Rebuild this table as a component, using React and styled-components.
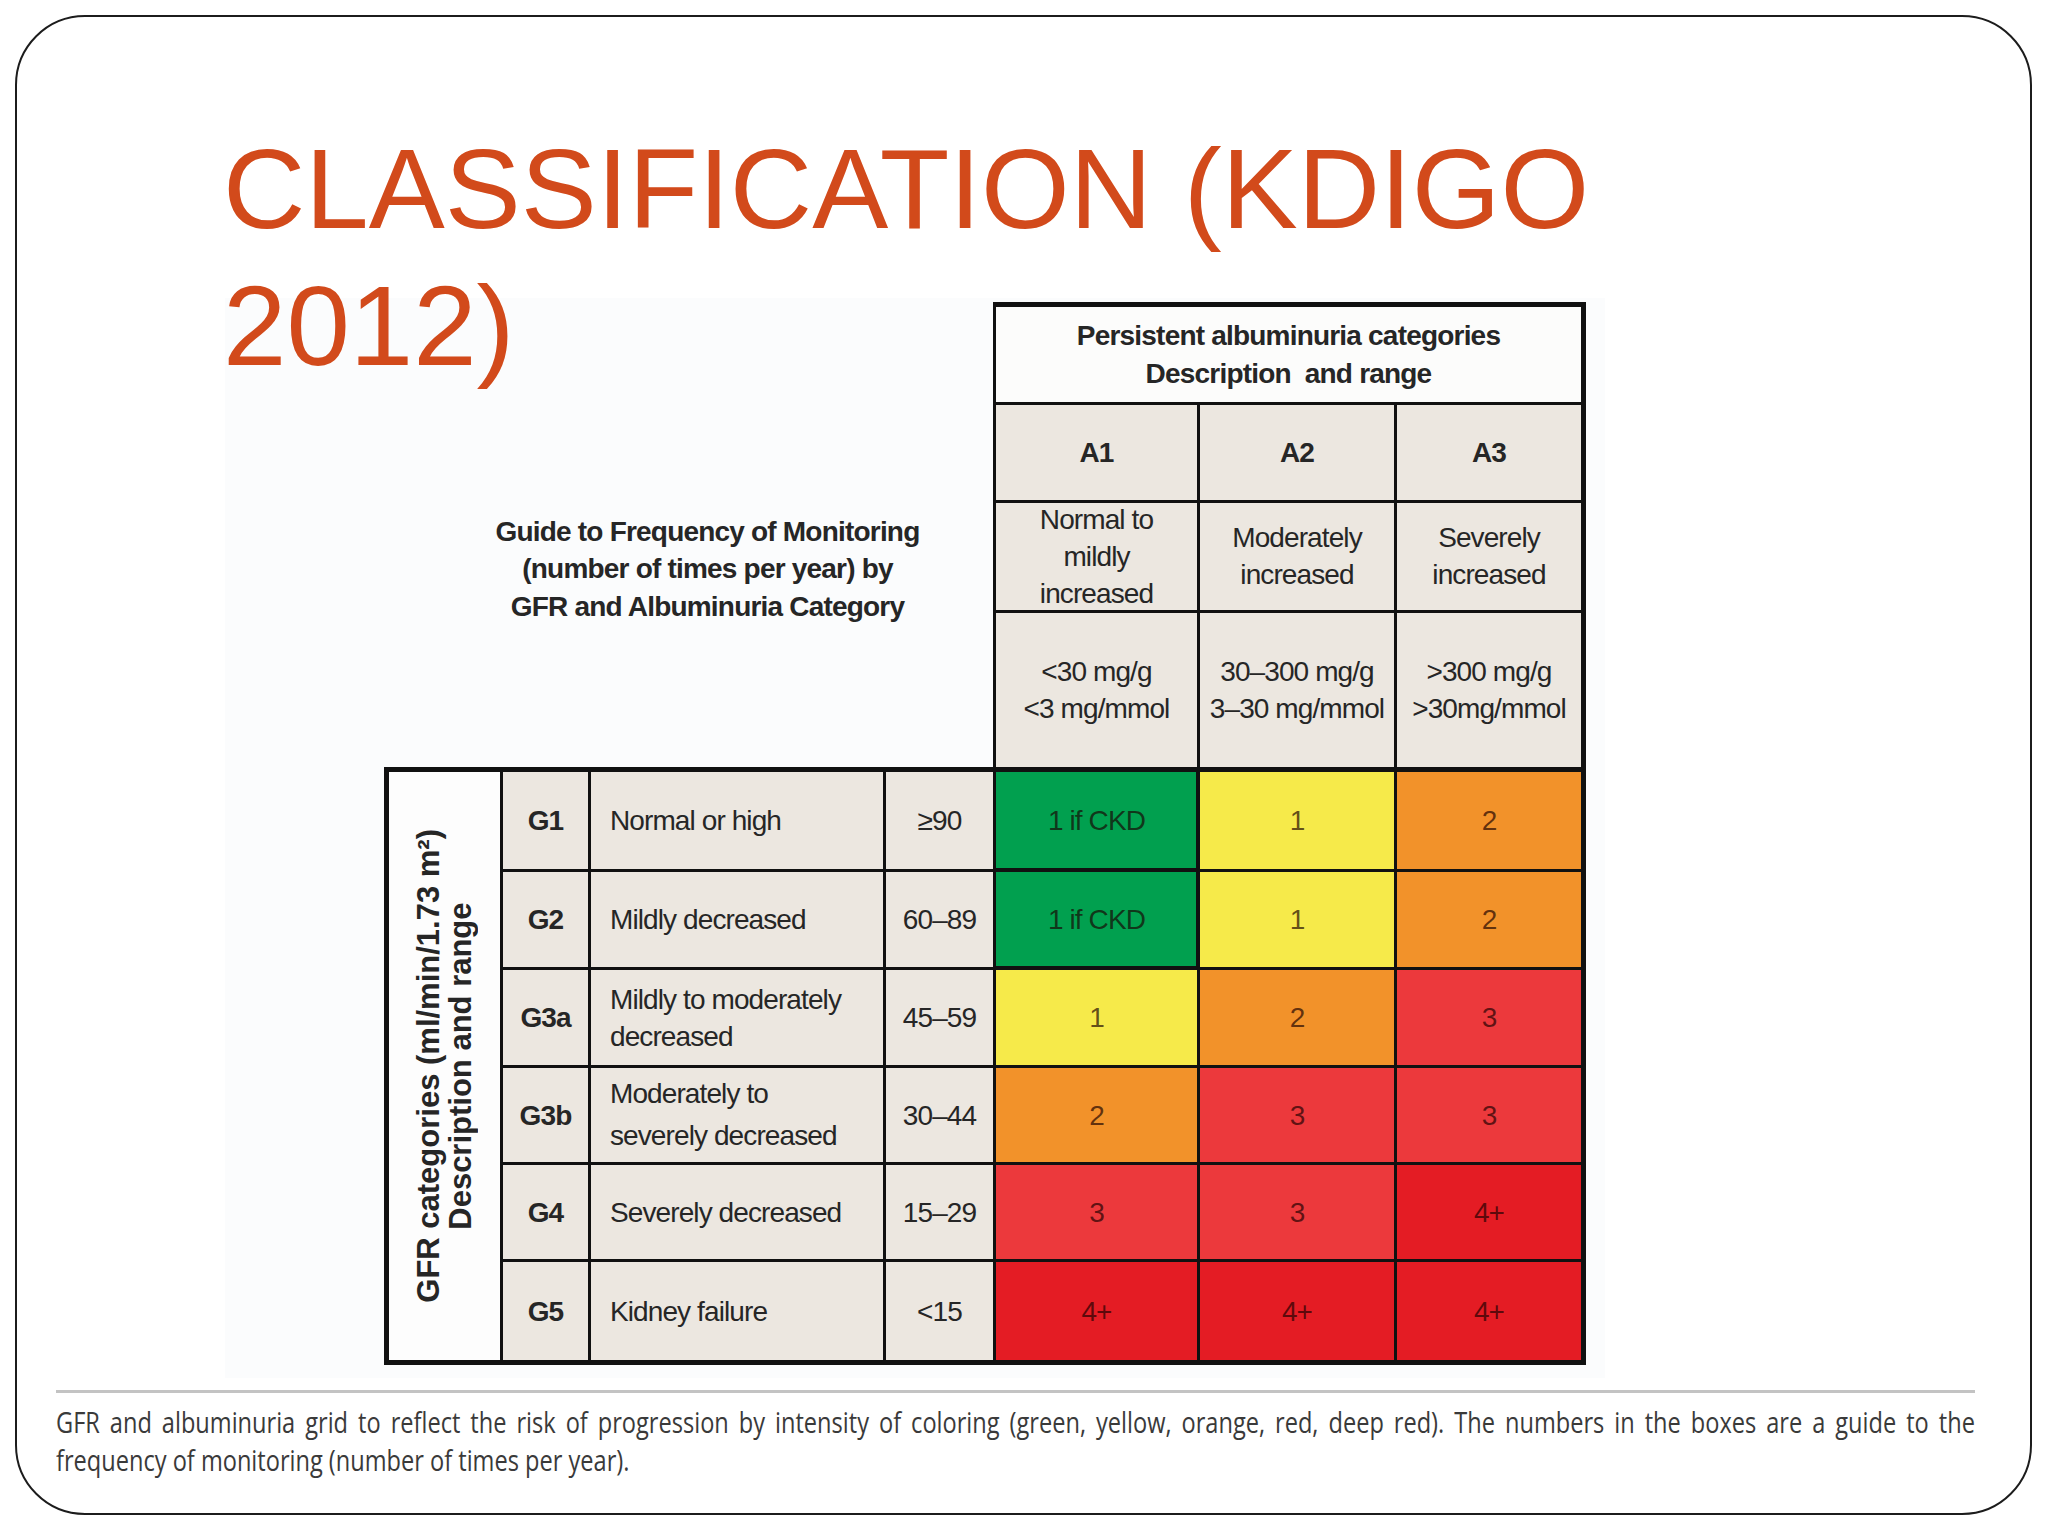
import React from "react";
import styled, { createGlobalStyle } from "styled-components";

const GlobalStyle = createGlobalStyle`
  html, body {
    margin: 0;
    padding: 0;
    background: #fff;
    overflow: hidden;
  }
  body {
    font-family: "Liberation Sans", Arial, sans-serif;
  }
`;

const RISK = {
  green: "#01a04f",
  yellow: "#f6ea4a",
  orange: "#f2922a",
  red: "#ec393c",
  deep: "#e41c24",
};

const gfrRows = [
  { code: "G1", desc: "Normal or high", range: "≥90", risk: [["1 if CKD", "green"], ["1", "yellow"], ["2", "orange"]] },
  { code: "G2", desc: "Mildly decreased", range: "60–89", risk: [["1 if CKD", "green"], ["1", "yellow"], ["2", "orange"]] },
  { code: "G3a", desc: ["Mildly to moderately", "decreased"], range: "45–59", risk: [["1", "yellow"], ["2", "orange"], ["3", "red"]] },
  { code: "G3b", desc: ["Moderately to", "severely decreased"], range: "30–44", risk: [["2", "orange"], ["3", "red"], ["3", "red"]] },
  { code: "G4", desc: "Severely decreased", range: "15–29", risk: [["3", "red"], ["3", "red"], ["4+", "deep"]] },
  { code: "G5", desc: "Kidney failure", range: "<15", risk: [["4+", "deep"], ["4+", "deep"], ["4+", "deep"]] },
];

const albCols = [
  { code: "A1", desc: ["Normal to", "mildly", "increased"], range: ["<30 mg/g", "<3 mg/mmol"] },
  { code: "A2", desc: ["Moderately", "increased"], range: ["30–300 mg/g", "3–30 mg/mmol"] },
  { code: "A3", desc: ["Severely", "increased"], range: [">300 mg/g", ">30mg/mmol"] },
];

const Page = styled.div`
  width: 2048px;
  height: 1536px;
  padding: 15px 0 0 15px;
  box-sizing: border-box;
`;

const Frame = styled.div`
  width: 2017px;
  height: 1500px;
  box-sizing: border-box;
  border: 2px solid #1c1c1c;
  border-radius: 70px;
  display: flex;
  flex-direction: column;
`;

const Stack = styled.div`
  display: grid;
  grid-template-areas: "stack";
  & > * {
    grid-area: stack;
    align-self: start;
    justify-self: start;
  }
`;

const Title = styled.h1`
  margin: 103px 0 0 206px;
  font-family: "Liberation Sans", Arial, sans-serif;
  font-weight: 400;
  font-size: 114px;
  line-height: 137px;
  color: #d24a1b;
`;

const Figure = styled.div`
  margin: 281px 0 0 208px;
  width: 1380px;
  box-sizing: border-box;
  padding: 4px 0 13px 159px;
  background: #fbfcfd;
`;

const Chart = styled.div`
  width: 1202px;
  display: flex;
  flex-direction: column;
  font-family: "Liberation Sans", Arial, sans-serif;
  color: #262626;
`;

const TopPart = styled.div`
  display: flex;
`;

const Guide = styled.div`
  width: 609px;
  height: 465px;
  box-sizing: border-box;
  padding: 69px 0 0 38px;
  display: flex;
  align-items: center;
  justify-content: center;
  text-align: center;
  font-weight: 700;
  font-size: 28px;
  line-height: 37.5px;
  letter-spacing: -0.8px;
`;

const HeaderBox = styled.div`
  flex: 1;
  box-sizing: border-box;
  border: solid #111;
  border-width: 5px 5px 0 3px;
  background: #111;
  display: grid;
  grid-template-columns: 201px 194px 1fr;
  grid-template-rows: 95px 94.5px 107px 154.5px;
  gap: 3px;
`;

const Grid = styled.div`
  display: grid;
  grid-template-columns: 111px 85px 292px 107px 201px 194px 1fr;
  grid-template-rows: 97px 95px 95px 94px 94px 98px;
  gap: 3px;
  border: 5px solid #111;
  background: #111;
`;

const Cell = styled.div`
  background: #ece7e0;
  display: flex;
  flex-direction: column;
  align-items: center;
  justify-content: center;
  text-align: center;
  font-size: 28px;
  line-height: 37px;
  letter-spacing: -0.9px;
  font-weight: ${(p) => (p.$bold ? 700 : 400)};
  white-space: nowrap;
`;

const HeadTitle = styled.div`
  grid-column: 1 / span 3;
  background: #fcfcfb;
  display: flex;
  align-items: center;
  justify-content: center;
  text-align: center;
  font-size: 28px;
  font-weight: 700;
  line-height: 38px;
  letter-spacing: -0.8px;
  white-space: pre;
`;

const DescCell = styled(Cell)`
  align-items: flex-start;
  text-align: left;
  padding-left: 19px;
  line-height: ${(p) => (p.$loose ? "42px" : "37px")};
`;

const SideCell = styled(Cell)`
  grid-row: 1 / span 6;
  background: #fdfdfd;
`;

const SideText = styled.div`
  writing-mode: vertical-rl;
  transform: rotate(180deg);
  font-weight: 700;
  font-size: 31px;
  line-height: 32px;
  letter-spacing: 0;
  text-align: center;
`;

const RiskCell = styled(Cell)`
  background: ${(p) => RISK[p.$tone]};
  color: rgba(25, 0, 0, 0.68);
  box-shadow: ${(p) => (p.$tone === "green" ? "inset -1px -1px 0 #111" : "none")};
`;

const Caption = styled.div`
  margin: 12px 0 0 39px;
  width: 1919px;
  border-top: 3px solid #c3c3c3;
  padding-top: 10px;
`;

const CaptionText = styled.p`
  margin: 0;
  width: 2360px;
  transform: scaleX(0.8131);
  transform-origin: left top;
  font-family: "Open Sans", "Noto Sans", sans-serif;
  font-size: 29px;
  line-height: 38px;
  color: #3a3a3a;
`;

const CaptionLine = styled.span`
  display: block;
  text-align: ${(p) => (p.$justify ? "justify" : "left")};
  text-align-last: ${(p) => (p.$justify ? "justify" : "auto")};
`;

const Lines = ({ items }) =>
  (Array.isArray(items) ? items : [items]).map((t, i) => <span key={i}>{t}</span>);

export default function App() {
  return (
    <>
      <GlobalStyle />
      <Page>
        <Frame>
          <Stack>
            <Figure>
              <Chart>
                <TopPart>
                  <Guide>
                    Guide to Frequency of Monitoring
                    <br />
                    (number of times per year) by
                    <br />
                    GFR and Albuminuria Category
                  </Guide>
                  <HeaderBox>
                    <HeadTitle>
                      {"Persistent albuminuria categories\nDescription  and range"}
                    </HeadTitle>
                    {albCols.map((c) => (
                      <Cell key={c.code} $bold>
                        {c.code}
                      </Cell>
                    ))}
                    {albCols.map((c) => (
                      <Cell key={c.code + "d"}>
                        <Lines items={c.desc} />
                      </Cell>
                    ))}
                    {albCols.map((c) => (
                      <Cell key={c.code + "r"}>
                        <Lines items={c.range} />
                      </Cell>
                    ))}
                  </HeaderBox>
                </TopPart>
                <Grid>
                  <SideCell>
                    <SideText>
                      GFR categories (ml/min/1.73 m²)
                      <br />
                      Description and range
                    </SideText>
                  </SideCell>
                  {gfrRows.map((r) => (
                    <React.Fragment key={r.code}>
                      <Cell $bold>{r.code}</Cell>
                      <DescCell $loose={r.code === "G3b"}>
                        <Lines items={r.desc} />
                      </DescCell>
                      <Cell>{r.range}</Cell>
                      {r.risk.map(([v, tone], i) => (
                        <RiskCell key={i} $tone={tone}>
                          {v}
                        </RiskCell>
                      ))}
                    </React.Fragment>
                  ))}
                </Grid>
              </Chart>
            </Figure>
            <Title>
              CLASSIFICATION (KDIGO
              <br />
              2012)
            </Title>
          </Stack>
          <Caption>
            <CaptionText>
              <CaptionLine $justify>
                GFR and albuminuria grid to reflect the risk of progression by intensity of coloring (green, yellow,
                orange, red, deep red). The numbers in the boxes are a guide to the
              </CaptionLine>
              <CaptionLine>frequency of monitoring (number of times per year).</CaptionLine>
            </CaptionText>
          </Caption>
        </Frame>
      </Page>
    </>
  );
}
